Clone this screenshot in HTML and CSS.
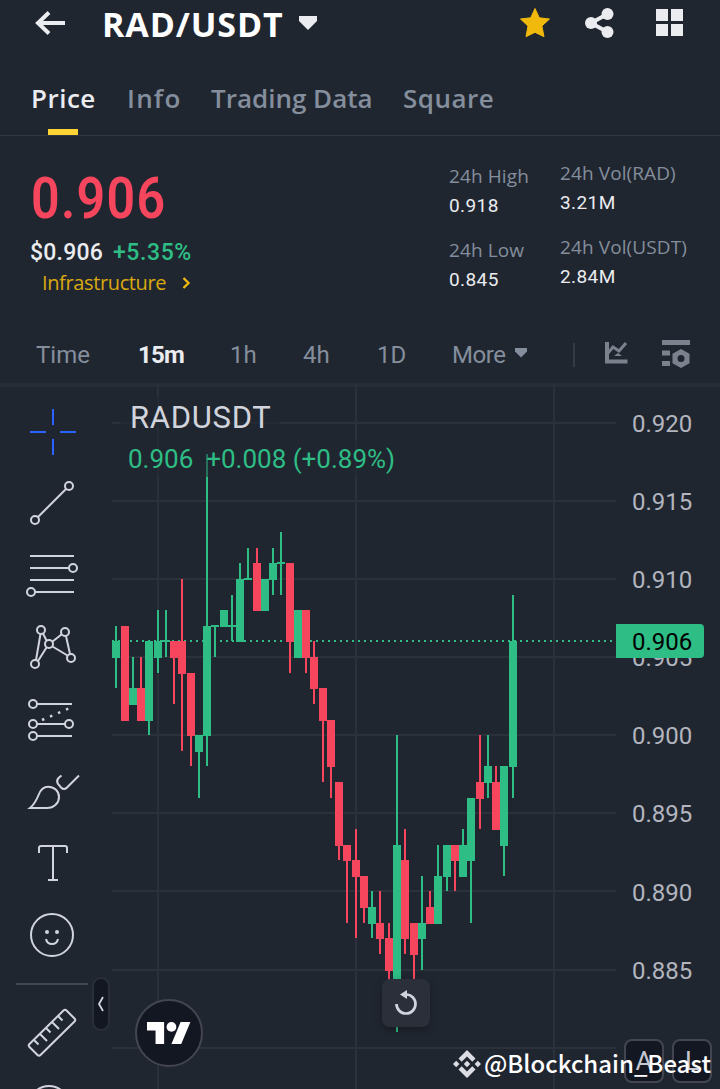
FILE: index.html
```html
<!DOCTYPE html>
<html lang="en">
<head>
    <meta charset="UTF-8">
    <meta name="viewport" content="width=device-width, initial-scale=1.0">
    <title>RAD/USDT</title>
    <link rel="stylesheet" href="styles.css">
</head>
<body>
    <header class="topbar">
        <svg class="back" width="32" height="26" viewBox="0 0 32 26"><path d="M15 2.500L4 13l11 10.500M4 13h27" fill="none" stroke="#eaecef" stroke-width="4"/></svg>
        <h1 class="pair">RAD/USDT</h1>
        <svg class="caret" width="18" height="14" viewBox="0 0 18 14"><path d="M0 0h18v5L9 14 0 5z" fill="#eaecef"/></svg>
        <div class="actions">
            <svg width="32" height="32" viewBox="0 0 32 32"><path d="M16 1.500l4.300 9.300 10.200 1.200-7.600 7 2.100 10.700L16 25.300l-9 4.400L9 19l-7.500-7 10.200-1.200z" fill="#f0b90b" stroke="#f0b90b" stroke-linejoin="round"/></svg>
            <svg width="32" height="32" viewBox="0 0 32 32"><g fill="#eaecef"><circle cx="8" cy="16" r="6"/><circle cx="24.500" cy="7" r="6"/><circle cx="24.500" cy="25" r="6"/></g><path d="M24.500 7L8 16l16.500 9" fill="none" stroke="#eaecef" stroke-width="4"/></svg>
            <svg class="grid-icon" width="28" height="28" viewBox="0 0 28 28"><path d="M0 0h12v12H0zM15 0h12v12H15zM0 15h12v12H0zM15 15h12v12H15z" fill="#eaecef"/></svg>
        </div>
    </header>

    <nav class="tabs">
        <a class="tab active">Price</a>
        <a class="tab info">Info</a>
        <a class="tab trading">Trading Data</a>
        <a class="tab square">Square</a>
    </nav>

    <section class="ticker">
        <div class="last">
            <div class="price">0.906</div>
            <div class="change"><span class="usd">$0.906</span><span class="pct">+5.35%</span></div>
            <div class="tag">Infrastructure <svg width="9" height="12" viewBox="0 0 9 12"><path d="M1.500 1l5 5-5 5" fill="none" stroke="#f0b90b" stroke-width="2.300"/></svg></div>
        </div>
        <div class="stats">
            <div class="stat"><span>24h High</span><b>0.918</b></div>
            <div class="stat"><span>24h Low</span><b>0.845</b></div>
        </div>
        <div class="stats vol">
            <div class="stat"><span>24h Vol(RAD)</span><b>3.21M</b></div>
            <div class="stat"><span>24h Vol(USDT)</span><b>2.84M</b></div>
        </div>
    </section>

    <nav class="intervals">
        <span class="time">Time</span>
        <span class="m15">15m</span>
        <span class="h1">1h</span>
        <span class="h4">4h</span>
        <span class="d1">1D</span>
        <span class="more">More</span>
        <svg class="more-caret" width="12" height="10" viewBox="0 0 12 10"><path d="M0 0h12v3.500L6 9.500 0 3.500z" fill="#848e9c"/></svg>
        <i class="split"></i>
        <svg class="kline" width="24" height="24" viewBox="0 0 24 24"><path d="M3 1v19.500h20.500" fill="none" stroke="#7b818d" stroke-width="4"/><path d="M4 12l5-6 6 4 7-8" fill="none" stroke="#7b818d" stroke-width="3"/><path d="M10 15l4-3 4 3z" fill="#7b818d"/></svg>
        <svg class="settings" width="30" height="30" viewBox="0 0 30 30"><path d="M1 1h28v5H1zM1 11.500h8v5H1zM1 22h8v5H1z" fill="#7b818d"/><path d="M20 10l8.500 4.800v9.400L20 29l-8.500-4.800v-9.400zm0 6a3.500 3.500 0 1 0 0 7 3.500 3.500 0 0 0 0-7z" fill="#7b818d" fill-rule="evenodd"/></svg>
    </nav>

    <main class="chart">
        <!-- Drawing tools -->
        <div class="tools">
            <svg class="tool cross" viewBox="0 0 112 72"><path d="M30 36h16M60 36h16M53 13v16M53 43v16"/></svg>
            <svg class="tool" viewBox="0 0 112 72"><path d="M38 49l28-28"/><circle cx="69" cy="18" r="4"/><circle cx="35" cy="52" r="4"/></svg>
            <svg class="tool" viewBox="0 0 112 72"><path d="M30 16h44M30 28h39M30 40h44M35 52h39"/><circle cx="73" cy="28" r="4"/><circle cx="31" cy="52" r="4"/></svg>
            <svg class="tool" viewBox="0 0 112 72"><path d="M40.500 22L36 48M43 21.500l3.500 7M46.500 35.500L38 49M52.500 29.500l9-7M66 24l4 18M52.500 34.500l15 9"/><circle cx="41" cy="18" r="4"/><circle cx="65" cy="20" r="4"/><circle cx="49" cy="32" r="4"/><circle cx="35" cy="52" r="4"/><circle cx="71" cy="46" r="4"/></svg>
            <svg class="tool" viewBox="0 0 112 72"><path d="M37 20h35M37 40h28M37 52h35"/><path d="M42 36l27-11.600" stroke-width="2.500" stroke-dasharray="2.500 6.200"/><circle cx="33" cy="20" r="4"/><circle cx="33" cy="40" r="4"/><circle cx="69" cy="40" r="4"/><circle cx="33" cy="52" r="4"/></svg>
            <svg class="tool" viewBox="0 0 112 72"><path d="M30 52c5-4 7-9 9-14 2-5 5-7.300 9-7.300 6 0 11 4.300 11 10.300s-5 11-12 11z"/><path d="M61.500 19.500L58.500 22q-2.500 3-.5 6l3 3.500q3 3 6 0l12-12"/></svg>
            <svg class="tool" viewBox="0 0 112 72"><path d="M39 25v-5q0-2 2-2h24q2 0 2 2v5M53 18v34M48 52h10"/></svg>
            <svg class="tool" viewBox="0 0 112 72"><circle cx="52" cy="35" r="21"/><path d="M46 39q1 5 6 5t6-5"/><circle class="dot" cx="47" cy="32" r="2"/><circle class="dot" cx="57" cy="32" r="2"/></svg>
            <hr>
            <svg class="tool" viewBox="0 0 112 72"><path d="M63.500 14.500q1.500-1.500 3 0l8 8q1.500 1.500 0 3L40.500 59q-1.500 1.500-3 0l-8-8q-1.500-1.500 0-3zM34 44l4.500 4.500M40 38l7 7M46 32l4.500 4.500M52 26l7 7M58 20l4.500 4.500"/></svg>
            <svg class="tool" viewBox="0 0 112 72"><circle cx="49" cy="38" r="20"/></svg>
        </div>

        <div class="plot">
            <svg id="candles" width="504" height="705" viewBox="112 384 504 705" shape-rendering="crispEdges"></svg>
            <div class="legend">
                <span class="symbol">RADUSDT</span>
                <span class="values">0.906&nbsp; +0.008 (+0.89%)</span>
            </div>
            <div class="tv-logo">
                <svg width="44" height="22" viewBox="0 4 36 18"><path d="M14 22H7V11H0V4h14zM28 22h-8l7.500-18h8z" fill="#fff"/><circle cx="20" cy="8" r="4" fill="#fff"/></svg>
            </div>
            <button class="reset">
                <svg width="24" height="26" viewBox="0 0 24 26"><path d="M2.500 14a9.500 9.500 0 1 0 9.500-9.500" fill="none" stroke="#d1d4dc" stroke-width="2.700"/><path d="M13 0v9L6 4.500z" fill="#d1d4dc"/></svg>
            </button>
        </div>

        <div class="axis">
            <span>0.920</span>
            <span>0.915</span>
            <span>0.910</span>
            <span>0.905</span>
            <span>0.900</span>
            <span>0.895</span>
            <span>0.890</span>
            <span>0.885</span>
            <div class="current">0.906</div>
            <div class="scale"><button>A</button><button>L</button></div>
        </div>

        <div class="collapse"><svg width="8" height="16" viewBox="0 0 8 16"><path d="M6 1L2 8l4 7" fill="none" stroke="#d1d4dc" stroke-width="1.800"/></svg></div>

        <div class="watermark">
            <svg width="28" height="28" viewBox="0 0 28 28"><g fill="#dcdce4"><path d="M14 0l8.500 8.500-3.200 3.200L14 6.400l-5.300 5.300-3.200-3.200zM14 28l-8.500-8.500 3.200-3.200 5.300 5.300 5.300-5.300 3.200 3.200zM14 10.800l3.200 3.200-3.200 3.200-3.200-3.200zM3.200 10.800L6.400 14l-3.200 3.200L0 14zM24.800 10.800L28 14l-3.200 3.200-3.200-3.200z"/></g></svg>
            <span>@Blockchain_Beast</span>
        </div>
    </main>

    <script>
        // x, open, high, low, close (prices in thousandths)
        const candles = [
            [116, 905, 907, 903, 906], [125, 907, 907, 901, 901], [133, 902, 905, 902, 903],
            [141, 903, 905, 901, 901], [149, 901, 906, 900, 906], [158, 905, 908, 904, 906],
            [166, 906, 908, 905, 906], [174, 906, 906, 902, 905], [182, 906, 910, 899, 904],
            [191, 904, 904, 898, 900], [199, 899, 900, 896, 900], [207, 900, 918, 898, 907],
            [215, 907, 907, 905, 907], [224, 907, 908, 907, 908], [232, 907, 909, 906, 907],
            [240, 906, 911, 906, 910], [248, 910, 912, 910, 910], [257, 911, 912, 908, 908],
            [265, 908, 910, 908, 910], [273, 910, 912, 909, 911], [281, 911, 913, 909, 911],
            [290, 911, 911, 904, 906], [298, 905, 908, 905, 908], [306, 908, 908, 904, 905],
            [314, 905, 906, 902, 903], [323, 903, 903, 897, 901], [331, 901, 901, 896, 898],
            [339, 897, 897, 892, 893], [347, 893, 893, 888, 892], [356, 892, 894, 887, 891],
            [364, 891, 891, 888, 889], [372, 888, 890, 887, 889], [380, 888, 890, 886, 887],
            [389, 887, 888, 884, 885], [397, 884, 900, 881, 893], [405, 892, 894, 886, 887],
            [414, 888, 888, 884, 886], [422, 887, 891, 885, 888], [430, 889, 890, 888, 888],
            [438, 888, 893, 888, 891], [447, 891, 893, 890, 893], [455, 893, 893, 890, 892],
            [463, 891, 894, 891, 893], [471, 892, 896, 888, 896], [480, 897, 900, 894, 896],
            [488, 897, 900, 896, 898], [496, 897, 898, 894, 894], [504, 893, 898, 891, 898],
            [513, 898, 909, 896, 906]
        ];

        function y(price) {
            return Math.round(422.7 + (920 - price) * 15.625);
        }

        function rect(x, top, width, height, cls) {
            return `<rect class="${cls}" x="${x}" y="${top}" width="${width}" height="${height}"/>`;
        }

        let out = '';
        for (let p = 920; p >= 880; p -= 5) {
            out += rect(112, y(p) - 1, 504, 2, 'grid');
        }
        for (const x of [158, 356, 554]) {
            out += rect(x - 1, 384, 2, 705, 'grid');
        }
        out += '<path class="last-line" d="M112 641h504"/>';

        for (const [x, open, high, low, close] of candles) {
            const cls = close >= open ? 'up' : 'down';
            const top = y(Math.max(open, close));
            const bottom = y(Math.min(open, close)) + 1;
            out += rect(x - 1, y(high), 2, y(low) - y(high), cls);
            out += open === close
                ? rect(x - 4, top - 1, 8, 2, cls)
                : rect(x - 4, top, 8, bottom - top, cls);
        }
        document.getElementById('candles').innerHTML = out;
    </script>
</body>
</html>
```
FILE: styles.css
```css
* {
    box-sizing: border-box;
}

body {
    margin: 0;
    width: 720px;
    height: 1089px;
    overflow: hidden;
    background-color: #202630;
    color: #eaecef;
    font-family: "Open Sans", sans-serif;
}

svg {
    display: block;
    flex: none;
}

.topbar {
    display: flex;
    align-items: center;
    height: 48px;
    padding: 0 36px 2px 34px;
}

.pair {
    margin: 2px 0 0 36px;
    width: 183px;
    font-size: 34px;
    font-weight: 700;
    line-height: 44px;
    letter-spacing: 0.9px;
    color: #fff;
    white-space: nowrap;
}

.caret {
    margin-left: 14px;
}

.actions {
    display: flex;
    align-items: center;
    gap: 32px;
    margin-left: auto;
}

.grid-icon {
    margin-left: 9px;
}

.tabs {
    display: flex;
    height: 88px;
    padding-left: 31px;
    border-bottom: 1px solid #323943;
}

.tab {
    position: relative;
    padding-top: 30px;
    font-size: 26px;
    font-weight: 600;
    line-height: 40px;
    letter-spacing: 0.5px;
    color: #848e9c;
    white-space: nowrap;
}

.tab.active {
    width: 96px;
    color: #eaecef;
}

.tab.active::after {
    content: "";
    position: absolute;
    left: 17px;
    bottom: 0;
    width: 30px;
    height: 6px;
    background-color: #fcd535;
}

.info {
    width: 84px;
    letter-spacing: 1.2px;
}

.trading {
    width: 192px;
    letter-spacing: 0;
}

.ticker {
    display: flex;
    height: 189px;
    padding-left: 31px;
}

.last {
    width: 418px;
}

.price {
    margin-top: 32px;
    height: 65px;
    font-family: Roboto, sans-serif;
    font-size: 57px;
    font-weight: 600;
    line-height: 62px;
    letter-spacing: 1.5px;
    color: #f6465d;
    transform: scaleX(0.88);
    transform-origin: left;
}

.change {
    display: flex;
    gap: 10px;
    margin-left: -1px;
    height: 39px;
    font-family: Roboto, sans-serif;
    font-size: 23px;
    font-weight: 500;
    line-height: 40px;
    letter-spacing: 0.2px;
}

.pct {
    letter-spacing: 0.6px;
    color: #2ebd85;
}

.tag {
    display: flex;
    align-items: center;
    gap: 16px;
    padding-left: 11px;
    font-size: 20px;
    line-height: 22px;
    letter-spacing: -0.370px;
    color: #dba90f;
}

.stats {
    width: 111px;
    padding-top: 26px;
}

.stats.vol {
    padding-top: 23px;
}

.stat {
    height: 74px;
    white-space: nowrap;
}

.stat span,
.stat b {
    display: block;
    font-size: 19px;
    line-height: 29px;
    font-weight: 400;
    letter-spacing: 0.1px;
    color: #848e9c;
}

.stat b {
    font-family: Roboto, sans-serif;
    letter-spacing: 0.4px;
    color: #eaecef;
}

.intervals {
    display: flex;
    align-items: center;
    height: 59px;
    padding: 2px 0 0 36px;
    border-bottom: 1px solid #272d37;
    font-family: Roboto, sans-serif;
    font-size: 24px;
    color: #848e9c;
}

.time {
    width: 102px;
}

.m15 {
    width: 92px;
    font-weight: 700;
    letter-spacing: -0.8px;
    color: #eaecef;
}

.h1 {
    width: 73px;
}

.h4 {
    width: 74px;
}

.d1 {
    width: 75px;
}

.more {
    width: 63px;
    letter-spacing: -0.4px;
}

.more-caret {
    margin-top: -4px;
}

.split {
    width: 2px;
    height: 24px;
    margin-left: 46px;
    background-color: #333b47;
}

.kline {
    margin-left: 29px;
    margin-top: -4px;
}

.settings {
    margin-left: 33px;
    margin-top: -2px;
}

.chart {
    position: relative;
    display: flex;
    height: 705px;
    box-shadow: inset 0 3px #272d37;
    font-family: Roboto, sans-serif;
}

.tools {
    width: 112px;
    padding-top: 12px;
}

.tool {
    width: 112px;
    height: 72px;
    fill: none;
    stroke: #d1d4dc;
    stroke-width: 2;
}

.tool .dot {
    fill: #d1d4dc;
    stroke: none;
}

.cross {
    stroke: #2962ff;
}

.tools hr {
    width: 72px;
    height: 2px;
    margin: 11px 0 11px 16px;
    border: 0;
    background-color: #434651;
}

.plot {
    position: relative;
    width: 504px;
}

.grid {
    fill: #2b313b;
}

.up {
    fill: #2ebd85;
}

.down {
    fill: #f6465d;
}

.last-line {
    stroke: #2ebd85;
    stroke-width: 2;
    stroke-dasharray: 2 4;
}

.legend {
    position: absolute;
    left: 8px;
    top: 12px;
    display: flex;
    flex-direction: column;
    align-items: flex-start;
}

.legend span {
    background-color: rgba(32, 38, 48, 0.5);
    white-space: nowrap;
}

.symbol {
    padding: 0 8px 0 10px;
    font-size: 31px;
    line-height: 44px;
    letter-spacing: 0.7px;
    color: #d1d4dc;
}

.values {
    height: 37px;
    padding: 0 3px 0 8px;
    font-size: 26px;
    line-height: 39px;
    color: #2ebd85;
}

.tv-logo {
    position: absolute;
    left: 23px;
    top: 615px;
    display: flex;
    align-items: center;
    justify-content: center;
    width: 68px;
    height: 68px;
    border: 2px solid #434651;
    border-radius: 50%;
    background-color: #131722;
}

.reset {
    position: absolute;
    left: 270px;
    top: 595px;
    display: flex;
    align-items: center;
    justify-content: center;
    width: 48px;
    height: 48px;
    padding: 0;
    border: 0;
    border-radius: 8px;
    background-color: #2a2f39;
    box-shadow: 0 3px 8px rgba(0, 0, 0, 0.3);
}

.axis {
    position: relative;
    width: 104px;
}

.axis span {
    display: block;
    height: 78.1px;
    padding-left: 16px;
    font-size: 24px;
    line-height: 80px;
    color: #b2b5be;
}

.current {
    position: absolute;
    left: 0;
    top: 240px;
    width: 88px;
    height: 34px;
    padding-left: 16px;
    border-radius: 0 4px 4px 0;
    background-color: #2ebd85;
    font-size: 24px;
    line-height: 37px;
    color: #000;
}

.scale {
    position: absolute;
    left: 8px;
    top: 655px;
    display: flex;
    gap: 8px;
}

.scale button {
    width: 40px;
    height: 44px;
    padding: 0;
    border: 2px solid #434651;
    border-radius: 8px;
    background-color: #131722;
    font-family: Roboto, sans-serif;
    font-size: 26px;
    line-height: 38px;
    color: #c5c8d0;
}

.collapse {
    position: absolute;
    left: 92px;
    top: 593px;
    display: flex;
    align-items: center;
    justify-content: center;
    width: 18px;
    height: 54px;
    border: 2px solid #2a2e39;
    border-radius: 9px;
    background-color: #131722;
}

.watermark {
    position: absolute;
    left: 453px;
    top: 663px;
    display: flex;
    align-items: center;
    gap: 3px;
    font-family: "Noto Sans CJK SC", sans-serif;
    font-size: 24px;
    font-weight: 500;
    line-height: 36px;
    color: #fff;
    white-space: nowrap;
}

.watermark span {
    margin-top: -2px;
}
```
